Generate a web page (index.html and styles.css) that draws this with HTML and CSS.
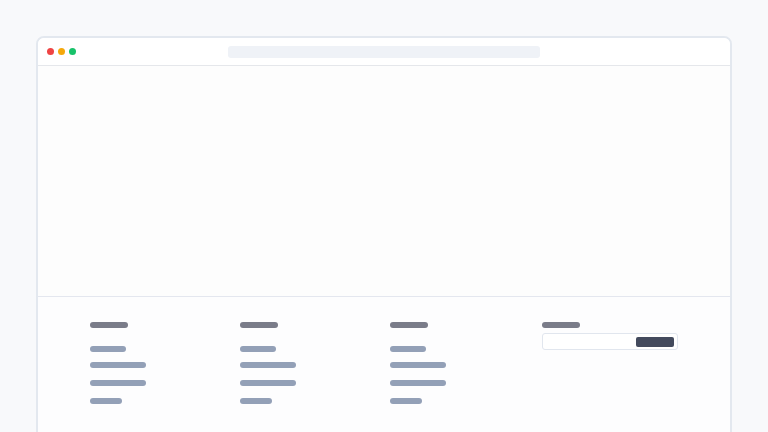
FILE: index.html
```html
<!DOCTYPE html>
<html lang="en">
<head>
<meta charset="utf-8">
<title>Footer preview</title>
<link rel="stylesheet" href="styles.css">
</head>
<body>
<div class="page">
  <div class="window">
    <div class="titlebar">
      <div class="dots">
        <span class="dot red"></span>
        <span class="dot amber"></span>
        <span class="dot green"></span>
      </div>
      <div class="address"></div>
    </div>
    <div class="content"></div>
    <footer class="footer">
      <div class="col">
        <div class="heading"></div>
        <ul class="links">
          <li class="bar w36"></li>
          <li class="bar w56"></li>
          <li class="bar w56"></li>
          <li class="bar w32"></li>
        </ul>
      </div>
      <div class="col">
        <div class="heading"></div>
        <ul class="links">
          <li class="bar w36"></li>
          <li class="bar w56"></li>
          <li class="bar w56"></li>
          <li class="bar w32"></li>
        </ul>
      </div>
      <div class="col">
        <div class="heading"></div>
        <ul class="links">
          <li class="bar w36"></li>
          <li class="bar w56"></li>
          <li class="bar w56"></li>
          <li class="bar w32"></li>
        </ul>
      </div>
      <div class="col">
        <div class="heading"></div>
        <div class="subscribe">
          <span class="btn"></span>
        </div>
      </div>
    </footer>
  </div>
</div>
</body>
</html>
```
FILE: styles.css
```css
* { box-sizing: border-box; }
html, body {
  margin: 0;
  padding: 0;
  background: #f8f9fb;
  font-family: "Liberation Sans", Arial, sans-serif;
}
.page {
  width: 768px;
  height: 432px;
  overflow: hidden;
  padding: 36px 36px 0 36px;
}
.window {
  width: 696px;
  height: 420px;
  border: 2px solid #e3e8ef;
  border-radius: 8px;
  background: #fdfdfd;
  overflow: hidden;
}
.titlebar {
  height: 28px;
  background: #ffffff;
  border-bottom: 1px solid #e5e7eb;
  display: flex;
  align-items: flex-start;
  justify-content: center;
  padding-top: 8px;
  position: relative;
}
.dots {
  position: absolute;
  left: 9px;
  top: 10px;
  display: flex;
  gap: 4px;
}
.dot {
  width: 7px;
  height: 7px;
  border-radius: 50%;
  display: block;
}
.dot.red { background: #ef4444; }
.dot.amber { background: #f5a80b; }
.dot.green { background: #17c26a; }
.address {
  width: 312px;
  height: 12px;
  border-radius: 3px;
  background: #eff2f7;
}
.content {
  height: 231px;
  background: #fdfdfd;
  border-bottom: 1px solid #e4e7ef;
}
.footer {
  display: grid;
  grid-template-columns: 150px 150px 152px 136px;
  padding: 25px 0 0 52px;
  background: #fdfdfe;
  height: 200px;
}
.heading {
  width: 38px;
  height: 6px;
  border-radius: 3px;
  background: #7a7c89;
}
.links {
  list-style: none;
  margin: 18px 0 0 0;
  padding: 0;
  display: flex;
  flex-direction: column;
}
.bar {
  height: 6px;
  border-radius: 3px;
  background: #93a0b7;
}
.bar + .bar { margin-top: 12px; }
.links .bar:nth-child(2) { margin-top: 10px; }
.w36 { width: 36px; }
.w56 { width: 56px; }
.w32 { width: 32px; }
.subscribe {
  margin-top: 5px;
  width: 136px;
  height: 17px;
  border: 1px solid #e1e6ee;
  border-radius: 3px;
  background: #ffffff;
  display: flex;
  justify-content: flex-end;
  align-items: flex-start;
  padding: 3px 3px 0 0;
}
.btn {
  width: 38px;
  height: 10px;
  border-radius: 2px;
  background: #434a5d;
  display: block;
}
```
